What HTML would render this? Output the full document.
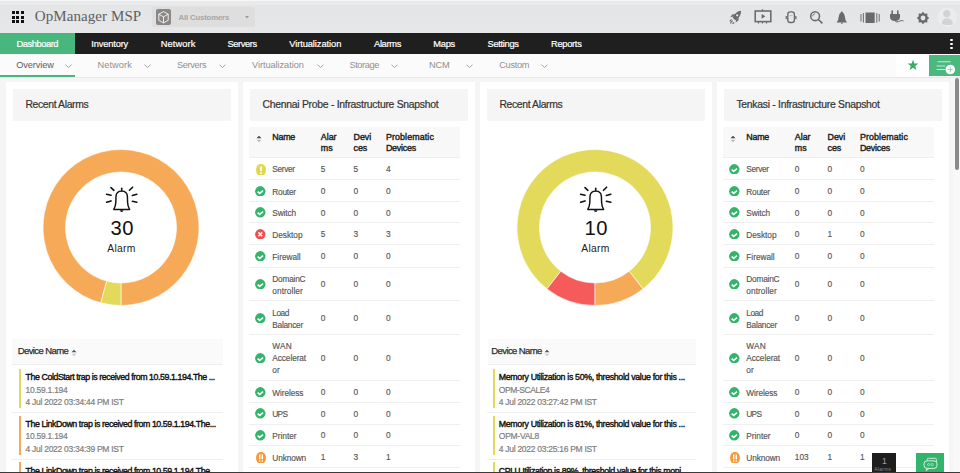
<!DOCTYPE html><html><head><meta charset="utf-8"><style>
*{margin:0;padding:0;box-sizing:border-box}
html,body{width:960px;height:473px;overflow:hidden;background:#f5f5f6;font-family:"Liberation Sans",sans-serif;color:#333}
div,span,svg{position:absolute;white-space:nowrap}
.t{line-height:1}
#hdr{left:0;top:0;width:960px;height:33px;background:linear-gradient(#f7f7f7 0,#f7f7f7 1px,#e9eaeb 1px,#e9eaeb 4.5px,#e4e5e7 5.5px,#e6e7e9 100%)}
.gd{width:3.2px;height:3.2px;background:#111}
#cust{left:152.3px;top:7.4px;width:102.5px;height:19.5px;background:#dedede;border-radius:2px}
#custic{left:3.7px;top:1.8px;width:15.2px;height:16px;background:#8b8787;border-radius:2px}
#nav{left:0;top:33px;width:960px;height:21.4px;background:#1f1f1f}
#navact{left:0;top:33px;width:75px;height:21.4px;background:#47b77e}
#sub{left:0;top:54.4px;width:960px;height:23.4px;background:#fbfbfb;border-bottom:1px solid #e9e9e9}
#subul{left:0;top:75px;width:75px;height:2px;background:#47b77e}
.cv{width:4px;height:4px;border-right:1px solid #c2c2c2;border-bottom:1px solid #c2c2c2;transform:rotate(45deg)}
.card{top:82px;width:231.5px;height:400px;background:#fff}
.chd{top:88.7px;width:218.5px;height:32px;background:#f5f5f5}
.thd{top:127.1px;width:210.5px;height:31.3px;background:#f8f8f8;border-bottom:1px solid #eeeeee}
.sep{height:1px;background:#efefef}
.bd{width:1.5px}
</style></head><body>
<div id="hdr"></div>
<div class="gd" style="left:11.8px;top:11.2px"></div>
<div class="gd" style="left:16.3px;top:11.2px"></div>
<div class="gd" style="left:20.8px;top:11.2px"></div>
<div class="gd" style="left:11.8px;top:15.5px"></div>
<div class="gd" style="left:16.3px;top:15.5px"></div>
<div class="gd" style="left:20.8px;top:15.5px"></div>
<div class="gd" style="left:11.8px;top:19.8px"></div>
<div class="gd" style="left:16.3px;top:19.8px"></div>
<div class="gd" style="left:20.8px;top:19.8px"></div>
<span class="t" id="t0" style="left:34.75px;top:9.00px;font-size:15px;line-height:15px;letter-spacing:0.083px;font-family:'Liberation Serif',serif;color:#606060">OpManager MSP</span>
<div id="cust"><div id="custic"></div></div>
<svg style="left:157px;top:10px" width="13" height="15" viewBox="0 0 13 15"><path d="M6.5 1.6 L11.2 4.2 L11.2 10.3 L6.5 12.9 L1.8 10.3 L1.8 4.2 Z M1.8 4.2 L6.5 6.9 L11.2 4.2 M6.5 6.9 L6.5 12.9" fill="none" stroke="#fff" stroke-width="0.85" stroke-linejoin="round"/></svg>
<span class="t" id="t1" style="left:178.60px;top:14.20px;font-size:7.8px;line-height:7.8px;font-weight:bold;letter-spacing:-0.181px;color:#a6a6a6">All Customers</span>
<svg style="left:245px;top:16px" width="4" height="3" viewBox="0 0 4 3"><path d="M0 0 L4 0 L2 2.5Z" fill="#9a9a9a"/></svg>
<svg style="left:728px;top:9px" width="15" height="16" viewBox="0 0 15 16">
<path d="M13 1.8 C9.5 2 6.5 4.5 4.6 8.6 L7.2 11.2 C11.3 9.3 13 6 13 1.8Z" fill="#6a6a6a"/>
<path d="M5.2 7.6 L2.2 8.2 L4.2 5.4 L7 5Z M8.2 10.6 L7.6 13.6 L10.4 11.6 L10.8 8.8Z" fill="#6a6a6a"/>
<circle cx="9.2" cy="6.3" r="1.15" fill="#e6e7e9"/>
<path d="M2.5 14.5 C3 13 3.8 12.3 4.8 11.8 M1.8 12.4 C2.4 11.4 3 10.9 3.8 10.6 M4.6 15 C5.2 14.3 5.8 13.8 6.3 13.6" fill="none" stroke="#6a6a6a" stroke-width="1.1"/>
</svg>
<svg style="left:754px;top:9px" width="18" height="15" viewBox="0 0 18 15">
<rect x="1.2" y="2" width="15.6" height="10.6" fill="none" stroke="#6a6a6a" stroke-width="1.55"/>
<path d="M7.6 4.9 L11.4 7.3 L7.6 9.7Z" fill="#6a6a6a"/>
<path d="M8.5 0.3 L8.5 2 M4.5 12.6 L4.5 14.4 M8.5 12.6 L8.5 14.4 M12.5 12.6 L12.5 14.4" stroke="#6a6a6a" stroke-width="1.2"/>
</svg>
<svg style="left:784px;top:10px" width="14" height="14" viewBox="0 0 14 14">
<rect x="3.8" y="1.9" width="6.6" height="10.6" rx="2.6" fill="none" stroke="#6a6a6a" stroke-width="1.35"/>
<path d="M5.6 5.5 L8.6 5.5" stroke="#6a6a6a" stroke-width="0.6" opacity="0.5"/>
<rect x="1.6" y="6" width="1.5" height="3.2" fill="#6a6a6a" opacity="0.85"/>
<rect x="11.1" y="6" width="1.5" height="3.2" fill="#6a6a6a" opacity="0.85"/>
</svg>
<svg style="left:808.5px;top:10px" width="15" height="15" viewBox="0 0 15 15">
<circle cx="6.1" cy="6.2" r="4.4" fill="none" stroke="#6a6a6a" stroke-width="1.55"/>
<path d="M3.7 6.3 C3.8 4.8 4.6 3.9 6 3.8" fill="none" stroke="#6a6a6a" stroke-width="0.9"/>
<path d="M9.4 9.5 L13.4 13.4" stroke="#6a6a6a" stroke-width="1.6"/>
</svg>
<svg style="left:835.5px;top:10.8px" width="12" height="14" viewBox="0 0 12 14">
<path d="M5.8 0.4 C6.5 0.4 6.8 1.1 6.9 1.7 C8.3 2.5 8.7 4.3 9 6.6 L9.5 9 L11 11.4 L0.6 11.4 L2.1 9 L2.6 6.6 C2.9 4.3 3.3 2.5 4.7 1.7 C4.8 1.1 5.1 0.4 5.8 0.4Z" fill="#6a6a6a"/>
<path d="M4.9 11.6 L6.7 11.6 L6.5 12.8 L5.1 12.8Z" fill="#6a6a6a"/>
</svg>
<svg style="left:859.5px;top:11.5px" width="20" height="12" viewBox="0 0 20 12">
<rect x="5.5" y="0.5" width="9.2" height="10.5" fill="#6a6a6a"/>
<path d="M1 2 L1 9.5 M3.4 1 L3.4 10.5 M16.8 1 L16.8 10.5 M19.2 2 L19.2 9.5" stroke="#6a6a6a" stroke-width="1"/>
</svg>
<svg style="left:889px;top:10px" width="16" height="13" viewBox="0 0 16 13">
<path d="M3.2 1 L3.2 4 M8.8 1 L8.8 4" stroke="#6a6a6a" stroke-width="1.6" stroke-linecap="round"/>
<path d="M1 4 L11 4 L11 7 C11 9.5 9 11 6 11 C3 11 1 9.5 1 7Z" fill="#6a6a6a"/>
<path d="M6 10.5 C6.5 12.5 9 12 11 11 C12.5 10.3 13.5 10.5 14.5 11" fill="none" stroke="#6a6a6a" stroke-width="1"/>
</svg>
<svg style="left:916px;top:10.5px" width="14" height="14" viewBox="0 0 14 14">
<polygon points="7.00,0.80 8.76,2.75 11.38,2.62 11.25,5.24 13.20,7.00 11.25,8.76 11.38,11.38 8.76,11.25 7.00,13.20 5.24,11.25 2.62,11.38 2.75,8.76 0.80,7.00 2.75,5.24 2.62,2.62 5.24,2.75" fill="#6a6a6a"/>
<circle cx="7" cy="7" r="4.2" fill="#6a6a6a"/>
<circle cx="7" cy="7" r="2.4" fill="#e5e5e5"/>
</svg>
<svg style="left:937px;top:7px" width="21" height="21" viewBox="0 0 21 21">
<circle cx="10.3" cy="10.2" r="9.8" fill="#ececec"/>
<circle cx="9.8" cy="6.6" r="3.6" fill="#d3d3d3"/>
<path d="M4.9 17.2 C4.9 13 7 11.2 9.9 11.2 C12.8 11.2 15.9 13 15.9 17.2 C14 18.2 6.8 18.2 4.9 17.2Z" fill="#d3d3d3"/>
</svg>
<div id="nav"></div><div id="navact"></div>
<span class="t" id="t2" style="left:16.50px;top:39.83px;font-size:9.3px;line-height:9.3px;letter-spacing:-0.432px;color:#fff;-webkit-text-stroke:0.2px #fff">Dashboard</span>
<span class="t" id="t3" style="left:91.25px;top:39.83px;font-size:9.3px;line-height:9.3px;letter-spacing:-0.156px;color:#fff;-webkit-text-stroke:0.2px #fff">Inventory</span>
<span class="t" id="t4" style="left:160.80px;top:39.83px;font-size:9.3px;line-height:9.3px;letter-spacing:0.070px;color:#fff;-webkit-text-stroke:0.2px #fff">Network</span>
<span class="t" id="t5" style="left:227.50px;top:39.83px;font-size:9.3px;line-height:9.3px;letter-spacing:-0.404px;color:#fff;-webkit-text-stroke:0.2px #fff">Servers</span>
<span class="t" id="t6" style="left:289.20px;top:39.83px;font-size:9.3px;line-height:9.3px;letter-spacing:-0.072px;color:#fff;-webkit-text-stroke:0.2px #fff">Virtualization</span>
<span class="t" id="t7" style="left:374.00px;top:39.83px;font-size:9.3px;line-height:9.3px;letter-spacing:-0.323px;color:#fff;-webkit-text-stroke:0.2px #fff">Alarms</span>
<span class="t" id="t8" style="left:433.30px;top:39.83px;font-size:9.3px;line-height:9.3px;letter-spacing:-0.259px;color:#fff;-webkit-text-stroke:0.2px #fff">Maps</span>
<span class="t" id="t9" style="left:487.50px;top:39.83px;font-size:9.3px;line-height:9.3px;letter-spacing:-0.312px;color:#fff;-webkit-text-stroke:0.2px #fff">Settings</span>
<span class="t" id="t10" style="left:551.00px;top:39.83px;font-size:9.3px;line-height:9.3px;letter-spacing:-0.295px;color:#fff;-webkit-text-stroke:0.2px #fff">Reports</span>
<div style="left:950px;top:38.6px;width:3px;height:2.6px;background:#fff;border-radius:1px"></div>
<div style="left:950px;top:42.7px;width:3px;height:2.6px;background:#fff;border-radius:1px"></div>
<div style="left:950px;top:46.8px;width:3px;height:2.6px;background:#fff;border-radius:1px"></div>
<div id="sub"></div><div id="subul"></div>
<div style="left:896px;top:54.5px;width:33px;height:22px;background:#fff"></div>
<span class="t" id="t11" style="left:16.25px;top:60.91px;font-size:9.2px;line-height:9.2px;letter-spacing:-0.100px;color:#5a5a5a">Overview</span>
<svg style="left:64.6px;top:63.9px" width="7" height="4.5" viewBox="0 0 7 4.5"><path d="M0.5 0.6 L3.5 3.6 L6.5 0.6" fill="none" stroke="#a3a3a3" stroke-width="1"/></svg>
<span class="t" id="t12" style="left:97.40px;top:60.91px;font-size:9.2px;line-height:9.2px;letter-spacing:0.128px;color:#8f8f8f">Network</span>
<svg style="left:143.7px;top:63.9px" width="7" height="4.5" viewBox="0 0 7 4.5"><path d="M0.5 0.6 L3.5 3.6 L6.5 0.6" fill="none" stroke="#a3a3a3" stroke-width="1"/></svg>
<span class="t" id="t13" style="left:177.00px;top:60.91px;font-size:9.2px;line-height:9.2px;letter-spacing:-0.344px;color:#8f8f8f">Servers</span>
<svg style="left:218.6px;top:63.9px" width="7" height="4.5" viewBox="0 0 7 4.5"><path d="M0.5 0.6 L3.5 3.6 L6.5 0.6" fill="none" stroke="#a3a3a3" stroke-width="1"/></svg>
<span class="t" id="t14" style="left:252.00px;top:60.91px;font-size:9.2px;line-height:9.2px;letter-spacing:-0.049px;color:#8f8f8f">Virtualization</span>
<svg style="left:316.5px;top:63.9px" width="7" height="4.5" viewBox="0 0 7 4.5"><path d="M0.5 0.6 L3.5 3.6 L6.5 0.6" fill="none" stroke="#a3a3a3" stroke-width="1"/></svg>
<span class="t" id="t15" style="left:349.40px;top:60.91px;font-size:9.2px;line-height:9.2px;letter-spacing:-0.370px;color:#8f8f8f">Storage</span>
<svg style="left:391.1px;top:63.9px" width="7" height="4.5" viewBox="0 0 7 4.5"><path d="M0.5 0.6 L3.5 3.6 L6.5 0.6" fill="none" stroke="#a3a3a3" stroke-width="1"/></svg>
<span class="t" id="t16" style="left:429.00px;top:60.91px;font-size:9.2px;line-height:9.2px;letter-spacing:-0.112px;color:#8f8f8f">NCM</span>
<svg style="left:465.5px;top:63.9px" width="7" height="4.5" viewBox="0 0 7 4.5"><path d="M0.5 0.6 L3.5 3.6 L6.5 0.6" fill="none" stroke="#a3a3a3" stroke-width="1"/></svg>
<span class="t" id="t17" style="left:499.30px;top:60.91px;font-size:9.2px;line-height:9.2px;letter-spacing:-0.326px;color:#8f8f8f">Custom</span>
<svg style="left:540.7px;top:63.9px" width="7" height="4.5" viewBox="0 0 7 4.5"><path d="M0.5 0.6 L3.5 3.6 L6.5 0.6" fill="none" stroke="#a3a3a3" stroke-width="1"/></svg>
<svg style="left:907px;top:59.4px" width="12" height="12" viewBox="0 0 24 24"><path d="M12 1.5 L14.8 9 L22.8 9.2 L16.5 14.2 L18.7 22 L12 17.4 L5.3 22 L7.5 14.2 L1.2 9.2 L9.2 9Z" fill="#3aac6c"/></svg>
<div style="left:928.8px;top:54.8px;width:31.2px;height:21.7px;background:#4bb87e"></div>
<svg style="left:934px;top:58px" width="22" height="18" viewBox="0 0 22 18">
<path d="M3.5 3.7 L16.6 3.7" stroke="#b8e3ca" stroke-width="1.2"/>
<path d="M2.6 8 L11 8 M2.6 11.5 L11 11.5" stroke="#c9ead7" stroke-width="1.1"/>
<circle cx="16.3" cy="11.5" r="4.8" fill="#fff"/>
<path d="M16.3 9 L16.3 14 M13.8 11.5 L18.8 11.5" stroke="#8fd0ab" stroke-width="0.9"/>
</svg>
<div class="card" style="left:6px"></div>
<div class="chd" style="left:12.5px"></div>
<div class="card" style="left:243px"></div>
<div class="chd" style="left:249.5px"></div>
<div class="card" style="left:480px"></div>
<div class="chd" style="left:486.5px"></div>
<div class="card" style="left:717px"></div>
<div class="chd" style="left:723.5px"></div>
<span class="t" id="t18" style="left:25.40px;top:100.20px;font-size:10.4px;line-height:10.4px;letter-spacing:-0.360px;color:#333;-webkit-text-stroke:0.2px #333">Recent Alarms</span>
<span class="t" id="t19" style="left:262.50px;top:100.20px;font-size:10.4px;line-height:10.4px;letter-spacing:-0.273px;color:#333;-webkit-text-stroke:0.2px #333">Chennai Probe - Infrastructure Snapshot</span>
<span class="t" id="t20" style="left:499.40px;top:100.20px;font-size:10.4px;line-height:10.4px;letter-spacing:-0.360px;color:#333;-webkit-text-stroke:0.2px #333">Recent Alarms</span>
<span class="t" id="t21" style="left:736.40px;top:100.20px;font-size:10.4px;line-height:10.4px;letter-spacing:-0.278px;color:#333;-webkit-text-stroke:0.2px #333">Tenkasi - Infrastructure Snapshot</span>
<svg style="left:0;top:0" width="960" height="473"><path d="M100.81 302.84 A78 78 0 1 1 121.00 305.50 L121.00 283.00 A55.5 55.5 0 1 0 106.64 281.11Z" fill="#f6a956" stroke="#fff" stroke-width="0.6"/><path d="M121.00 305.50 A78 78 0 0 1 100.81 302.84 L106.64 281.11 A55.5 55.5 0 0 0 121.00 283.00Z" fill="#e3da5c" stroke="#fff" stroke-width="0.6"/></svg>
<svg style="left:104.0px;top:184px" width="36" height="30" viewBox="0 0 36 30">
<path d="M17.7 4.3 L17.7 6.8" stroke="#111" stroke-width="1.5" stroke-linecap="round"/>
<path d="M17.7 7.1 C14.4 7.1 12.2 9.3 12 12.4 L11.8 18.5 C11.7 21.3 11.1 23.3 9.8 25.4 L25.6 25.4 C24.3 23.3 23.7 21.3 23.6 18.5 L23.4 12.4 C23.2 9.3 21 7.1 17.7 7.1Z" fill="none" stroke="#111" stroke-width="1.45" stroke-linejoin="round"/>
<path d="M16 26.3 A1.7 1.7 0 0 0 19.4 26.3Z" fill="#111"/>
<path d="M7 3.6 L9.9 6.3 M2.6 10.2 L7 11.3 M2.6 18.3 L7 16.9 M28.6 3.2 L25.5 6.3 M32.8 10.2 L28.4 11.5 M32.8 18.3 L28.4 17.2" stroke="#111" stroke-width="1.6" stroke-linecap="round"/>
</svg>
<span class="t" id="t22" style="left:110.50px;top:218.40px;font-size:20.2px;line-height:20.2px;letter-spacing:0.416px;color:#111">30</span>
<span class="t" id="t23" style="left:107.20px;top:243.58px;font-size:10.3px;line-height:10.3px;letter-spacing:0.322px;color:#222">Alarm</span>
<svg style="left:0;top:0" width="960" height="473"><path d="M546.98 288.96 A78 78 0 1 1 643.02 288.96 L629.17 271.23 A55.5 55.5 0 1 0 560.83 271.23Z" fill="#e3da5c" stroke="#fff" stroke-width="0.6"/><path d="M595.00 305.50 A78 78 0 0 1 546.98 288.96 L560.83 271.23 A55.5 55.5 0 0 0 595.00 283.00Z" fill="#f55b5a" stroke="#fff" stroke-width="0.6"/><path d="M643.02 288.96 A78 78 0 0 1 595.00 305.50 L595.00 283.00 A55.5 55.5 0 0 0 629.17 271.23Z" fill="#f6a956" stroke="#fff" stroke-width="0.6"/></svg>
<svg style="left:578.0px;top:184px" width="36" height="30" viewBox="0 0 36 30">
<path d="M17.7 4.3 L17.7 6.8" stroke="#111" stroke-width="1.5" stroke-linecap="round"/>
<path d="M17.7 7.1 C14.4 7.1 12.2 9.3 12 12.4 L11.8 18.5 C11.7 21.3 11.1 23.3 9.8 25.4 L25.6 25.4 C24.3 23.3 23.7 21.3 23.6 18.5 L23.4 12.4 C23.2 9.3 21 7.1 17.7 7.1Z" fill="none" stroke="#111" stroke-width="1.45" stroke-linejoin="round"/>
<path d="M16 26.3 A1.7 1.7 0 0 0 19.4 26.3Z" fill="#111"/>
<path d="M7 3.6 L9.9 6.3 M2.6 10.2 L7 11.3 M2.6 18.3 L7 16.9 M28.6 3.2 L25.5 6.3 M32.8 10.2 L28.4 11.5 M32.8 18.3 L28.4 17.2" stroke="#111" stroke-width="1.6" stroke-linecap="round"/>
</svg>
<span class="t" id="t24" style="left:584.50px;top:218.40px;font-size:20.2px;line-height:20.2px;letter-spacing:0.416px;color:#111">10</span>
<span class="t" id="t25" style="left:581.20px;top:243.58px;font-size:10.3px;line-height:10.3px;letter-spacing:0.322px;color:#222">Alarm</span>
<div style="left:12.3px;top:339px;width:210.7px;height:25.6px;background:#fafafa"></div>
<div class="sep" style="left:12.3px;top:364.3px;width:210.7px;background:#eeeeee"></div>
<span class="t" id="t26" style="left:17.70px;top:346.26px;font-size:9.5px;line-height:9.5px;letter-spacing:-0.594px;color:#2e2e2e;-webkit-text-stroke:0.25px #2e2e2e">Device Name</span>
<svg style="left:70.5px;top:349px" width="6" height="8" viewBox="0 0 6 8"><path d="M0.5 3.2 L3 0.8 L5.5 3.2Z" fill="#555"/><path d="M0.5 4.8 L3 7.2 L5.5 4.8Z" fill="#ccc"/></svg>
<div class="bd" style="left:19.4px;top:368.8px;height:39px;background:#e3da5c"></div>
<span class="t" id="t27" style="left:25.60px;top:373.35px;font-size:8.8px;line-height:8.8px;letter-spacing:-0.426px;color:#111;-webkit-text-stroke:0.38px #111">The ColdStart trap is received from 10.59.1.194.The ...</span>
<span class="t" id="t28" style="left:25.60px;top:385.60px;font-size:8.5px;line-height:8.5px;letter-spacing:-0.273px;color:#808080;-webkit-text-stroke:0.2px #808080">10.59.1.194</span>
<span class="t" id="t29" style="left:25.60px;top:398.40px;font-size:8.5px;line-height:8.5px;letter-spacing:-0.284px;color:#808080;-webkit-text-stroke:0.2px #808080">4 Jul 2022 03:34:44 PM IST</span>
<div class="sep" style="left:11.3px;top:412.2px;width:212.1px"></div>
<div class="bd" style="left:19.4px;top:415.6px;height:39px;background:#f6a956"></div>
<span class="t" id="t30" style="left:25.60px;top:420.15px;font-size:8.8px;line-height:8.8px;letter-spacing:-0.415px;color:#111;-webkit-text-stroke:0.38px #111">The LinkDown trap is received from 10.59.1.194.The...</span>
<span class="t" id="t31" style="left:25.60px;top:432.40px;font-size:8.5px;line-height:8.5px;letter-spacing:-0.273px;color:#808080;-webkit-text-stroke:0.2px #808080">10.59.1.194</span>
<span class="t" id="t32" style="left:25.60px;top:445.20px;font-size:8.5px;line-height:8.5px;letter-spacing:-0.284px;color:#808080;-webkit-text-stroke:0.2px #808080">4 Jul 2022 03:34:39 PM IST</span>
<div class="sep" style="left:11.3px;top:459.0px;width:212.1px"></div>
<div class="bd" style="left:19.4px;top:462.4px;height:39px;background:#f6a956"></div>
<span class="t" id="t33" style="left:25.60px;top:466.95px;font-size:8.8px;line-height:8.8px;letter-spacing:-0.415px;color:#111;-webkit-text-stroke:0.38px #111">The LinkDown trap is received from 10.59.1.194.The...</span>
<div style="left:488px;top:339px;width:208px;height:25.6px;background:#fafafa"></div>
<div class="sep" style="left:488px;top:364.3px;width:208px;background:#eeeeee"></div>
<span class="t" id="t34" style="left:491.30px;top:346.26px;font-size:9.5px;line-height:9.5px;letter-spacing:-0.594px;color:#2e2e2e;-webkit-text-stroke:0.25px #2e2e2e">Device Name</span>
<svg style="left:544.1px;top:349px" width="6" height="8" viewBox="0 0 6 8"><path d="M0.5 3.2 L3 0.8 L5.5 3.2Z" fill="#555"/><path d="M0.5 4.8 L3 7.2 L5.5 4.8Z" fill="#ccc"/></svg>
<div class="bd" style="left:493px;top:368.8px;height:39px;background:#e3da5c"></div>
<span class="t" id="t35" style="left:498.80px;top:373.35px;font-size:8.8px;line-height:8.8px;letter-spacing:-0.332px;color:#111;-webkit-text-stroke:0.38px #111">Memory Utilization is 50%, threshold value for this ...</span>
<span class="t" id="t36" style="left:498.80px;top:385.60px;font-size:8.5px;line-height:8.5px;letter-spacing:-0.440px;color:#808080;-webkit-text-stroke:0.2px #808080">OPM-SCALE4</span>
<span class="t" id="t37" style="left:498.80px;top:398.40px;font-size:8.5px;line-height:8.5px;letter-spacing:-0.284px;color:#808080;-webkit-text-stroke:0.2px #808080">4 Jul 2022 03:27:42 PM IST</span>
<div class="sep" style="left:487px;top:412.2px;width:208.79999999999995px"></div>
<div class="bd" style="left:493px;top:415.6px;height:39px;background:#e3da5c"></div>
<span class="t" id="t38" style="left:498.80px;top:420.15px;font-size:8.8px;line-height:8.8px;letter-spacing:-0.332px;color:#111;-webkit-text-stroke:0.38px #111">Memory Utilization is 81%, threshold value for this ...</span>
<span class="t" id="t39" style="left:498.80px;top:432.40px;font-size:8.5px;line-height:8.5px;letter-spacing:-0.270px;color:#808080;-webkit-text-stroke:0.2px #808080">OPM-VAL8</span>
<span class="t" id="t40" style="left:498.80px;top:445.20px;font-size:8.5px;line-height:8.5px;letter-spacing:-0.284px;color:#808080;-webkit-text-stroke:0.2px #808080">4 Jul 2022 03:25:16 PM IST</span>
<div class="sep" style="left:487px;top:459.0px;width:208.79999999999995px"></div>
<div class="bd" style="left:493px;top:462.4px;height:39px;background:#e3da5c"></div>
<span class="t" id="t41" style="left:498.80px;top:466.95px;font-size:8.8px;line-height:8.8px;letter-spacing:-0.394px;color:#111;-webkit-text-stroke:0.38px #111">CPU Utilization is 89%, threshold value for this moni...</span>
<div class="thd" style="left:249px"></div>
<svg style="left:255.5px;top:135.2px" width="6" height="8" viewBox="0 0 6 8"><path d="M0.5 3.2 L3 0.8 L5.5 3.2Z" fill="#444"/><path d="M0.5 4.8 L3 7.2 L5.5 4.8Z" fill="#bbb"/></svg>
<span class="t" id="t42" style="left:272.30px;top:133.37px;font-size:8.9px;line-height:8.9px;letter-spacing:-0.247px;color:#222;-webkit-text-stroke:0.4px #222">Name</span>
<span class="t" id="t43" style="left:320.80px;top:133.37px;font-size:8.9px;line-height:8.9px;letter-spacing:-0.024px;color:#222;-webkit-text-stroke:0.4px #222">Alar</span>
<span class="t" id="t44" style="left:320.80px;top:143.77px;font-size:8.9px;line-height:8.9px;letter-spacing:0.000px;color:#222;-webkit-text-stroke:0.4px #222">ms</span>
<span class="t" id="t45" style="left:353.50px;top:133.37px;font-size:8.9px;line-height:8.9px;letter-spacing:-0.016px;color:#222;-webkit-text-stroke:0.4px #222">Devi</span>
<span class="t" id="t46" style="left:353.50px;top:143.77px;font-size:8.9px;line-height:8.9px;letter-spacing:0.000px;color:#222;-webkit-text-stroke:0.4px #222">ces</span>
<span class="t" id="t47" style="left:385.90px;top:133.37px;font-size:8.9px;line-height:8.9px;letter-spacing:0.113px;color:#222;-webkit-text-stroke:0.4px #222">Problematic</span>
<span class="t" id="t48" style="left:385.90px;top:143.77px;font-size:8.9px;line-height:8.9px;letter-spacing:-0.211px;color:#222;-webkit-text-stroke:0.4px #222">Devices</span>
<div class="sep" style="left:249px;top:179.3px;width:210.5px"></div>
<svg style="left:255.8px;top:163.5px" width="10" height="11.8" viewBox="0 0 10 11.8"><path d="M5 0.1 C8.2 0.1 9.9 2.3 9.9 5.9 C9.9 9.5 8.2 11.7 5 11.7 C1.8 11.7 0.1 9.5 0.1 5.9 C0.1 2.3 1.8 0.1 5 0.1Z" fill="#e2d84a"/><path d="M5 2.6 L5 7" stroke="#fff" stroke-width="1.7"/><circle cx="5" cy="9" r="0.9" fill="#fff"/></svg>
<span class="t" id="t49" style="left:272.30px;top:165.37px;font-size:8.3px;line-height:8.3px;letter-spacing:-0.340px;color:#555;-webkit-text-stroke:0.15px #555">Server</span>
<span class="t" id="t50" style="left:320.80px;top:164.97px;font-size:8.3px;line-height:8.3px;letter-spacing:0.000px;color:#555;-webkit-text-stroke:0.15px #555">5</span>
<span class="t" id="t51" style="left:353.50px;top:164.97px;font-size:8.3px;line-height:8.3px;letter-spacing:0.000px;color:#555;-webkit-text-stroke:0.15px #555">5</span>
<span class="t" id="t52" style="left:385.90px;top:164.97px;font-size:8.3px;line-height:8.3px;letter-spacing:0.000px;color:#555;-webkit-text-stroke:0.15px #555">4</span>
<div class="sep" style="left:249px;top:200.9px;width:210.5px"></div>
<svg style="left:255.4px;top:185.6px" width="10.6" height="10.6" viewBox="0 0 10 10"><circle cx="5" cy="5" r="4.9" fill="#34b46b"/><path d="M2.5 5.3 L4.4 7 L7.6 4.3" fill="none" stroke="#fff" stroke-width="1.55"/></svg>
<span class="t" id="t53" style="left:272.30px;top:187.77px;font-size:8.3px;line-height:8.3px;letter-spacing:-0.234px;color:#555;-webkit-text-stroke:0.15px #555">Router</span>
<span class="t" id="t54" style="left:320.80px;top:186.97px;font-size:8.3px;line-height:8.3px;letter-spacing:0.000px;color:#555;-webkit-text-stroke:0.15px #555">0</span>
<span class="t" id="t55" style="left:353.50px;top:186.97px;font-size:8.3px;line-height:8.3px;letter-spacing:0.000px;color:#555;-webkit-text-stroke:0.15px #555">0</span>
<span class="t" id="t56" style="left:385.90px;top:186.97px;font-size:8.3px;line-height:8.3px;letter-spacing:0.000px;color:#555;-webkit-text-stroke:0.15px #555">0</span>
<div class="sep" style="left:249px;top:222.4px;width:210.5px"></div>
<svg style="left:255.4px;top:207.2px" width="10.6" height="10.6" viewBox="0 0 10 10"><circle cx="5" cy="5" r="4.9" fill="#34b46b"/><path d="M2.5 5.3 L4.4 7 L7.6 4.3" fill="none" stroke="#fff" stroke-width="1.55"/></svg>
<span class="t" id="t57" style="left:272.30px;top:209.37px;font-size:8.3px;line-height:8.3px;letter-spacing:-0.123px;color:#555;-webkit-text-stroke:0.15px #555">Switch</span>
<span class="t" id="t58" style="left:320.80px;top:208.52px;font-size:8.3px;line-height:8.3px;letter-spacing:0.000px;color:#555;-webkit-text-stroke:0.15px #555">0</span>
<span class="t" id="t59" style="left:353.50px;top:208.52px;font-size:8.3px;line-height:8.3px;letter-spacing:0.000px;color:#555;-webkit-text-stroke:0.15px #555">0</span>
<span class="t" id="t60" style="left:385.90px;top:208.52px;font-size:8.3px;line-height:8.3px;letter-spacing:0.000px;color:#555;-webkit-text-stroke:0.15px #555">0</span>
<div class="sep" style="left:249px;top:244.2px;width:210.5px"></div>
<svg style="left:255.4px;top:228.8px" width="10.6" height="10.6" viewBox="0 0 10 10"><circle cx="5" cy="5" r="4.9" fill="#ef4e4e"/><path d="M3.2 3.2 L6.8 6.8 M6.8 3.2 L3.2 6.8" fill="none" stroke="#fff" stroke-width="1.4"/></svg>
<span class="t" id="t61" style="left:272.30px;top:230.87px;font-size:8.3px;line-height:8.3px;letter-spacing:-0.034px;color:#555;-webkit-text-stroke:0.15px #555">Desktop</span>
<span class="t" id="t62" style="left:320.80px;top:230.17px;font-size:8.3px;line-height:8.3px;letter-spacing:0.000px;color:#555;-webkit-text-stroke:0.15px #555">5</span>
<span class="t" id="t63" style="left:353.50px;top:230.17px;font-size:8.3px;line-height:8.3px;letter-spacing:0.000px;color:#555;-webkit-text-stroke:0.15px #555">3</span>
<span class="t" id="t64" style="left:385.90px;top:230.17px;font-size:8.3px;line-height:8.3px;letter-spacing:0.000px;color:#555;-webkit-text-stroke:0.15px #555">3</span>
<div class="sep" style="left:249px;top:266.7px;width:210.5px"></div>
<svg style="left:255.4px;top:250.9px" width="10.6" height="10.6" viewBox="0 0 10 10"><circle cx="5" cy="5" r="4.9" fill="#34b46b"/><path d="M2.5 5.3 L4.4 7 L7.6 4.3" fill="none" stroke="#fff" stroke-width="1.55"/></svg>
<span class="t" id="t65" style="left:272.30px;top:252.67px;font-size:8.3px;line-height:8.3px;letter-spacing:-0.024px;color:#555;-webkit-text-stroke:0.15px #555">Firewall</span>
<span class="t" id="t66" style="left:320.80px;top:252.32px;font-size:8.3px;line-height:8.3px;letter-spacing:0.000px;color:#555;-webkit-text-stroke:0.15px #555">0</span>
<span class="t" id="t67" style="left:353.50px;top:252.32px;font-size:8.3px;line-height:8.3px;letter-spacing:0.000px;color:#555;-webkit-text-stroke:0.15px #555">0</span>
<span class="t" id="t68" style="left:385.90px;top:252.32px;font-size:8.3px;line-height:8.3px;letter-spacing:0.000px;color:#555;-webkit-text-stroke:0.15px #555">0</span>
<div class="sep" style="left:249px;top:300.2px;width:210.5px"></div>
<svg style="left:255.4px;top:278.9px" width="10.6" height="10.6" viewBox="0 0 10 10"><circle cx="5" cy="5" r="4.9" fill="#34b46b"/><path d="M2.5 5.3 L4.4 7 L7.6 4.3" fill="none" stroke="#fff" stroke-width="1.55"/></svg>
<span class="t" id="t69" style="left:272.30px;top:275.17px;font-size:8.3px;line-height:8.3px;letter-spacing:-0.228px;color:#555;-webkit-text-stroke:0.15px #555">DomainC</span>
<span class="t" id="t70" style="left:272.30px;top:287.17px;font-size:8.3px;line-height:8.3px;letter-spacing:0.068px;color:#555;-webkit-text-stroke:0.15px #555">ontroller</span>
<span class="t" id="t71" style="left:320.80px;top:280.32px;font-size:8.3px;line-height:8.3px;letter-spacing:0.000px;color:#555;-webkit-text-stroke:0.15px #555">0</span>
<span class="t" id="t72" style="left:353.50px;top:280.32px;font-size:8.3px;line-height:8.3px;letter-spacing:0.000px;color:#555;-webkit-text-stroke:0.15px #555">0</span>
<span class="t" id="t73" style="left:385.90px;top:280.32px;font-size:8.3px;line-height:8.3px;letter-spacing:0.000px;color:#555;-webkit-text-stroke:0.15px #555">0</span>
<div class="sep" style="left:249px;top:334.0px;width:210.5px"></div>
<svg style="left:255.4px;top:312.6px" width="10.6" height="10.6" viewBox="0 0 10 10"><circle cx="5" cy="5" r="4.9" fill="#34b46b"/><path d="M2.5 5.3 L4.4 7 L7.6 4.3" fill="none" stroke="#fff" stroke-width="1.55"/></svg>
<span class="t" id="t74" style="left:272.30px;top:308.67px;font-size:8.3px;line-height:8.3px;letter-spacing:-0.467px;color:#555;-webkit-text-stroke:0.15px #555">Load</span>
<span class="t" id="t75" style="left:272.30px;top:320.67px;font-size:8.3px;line-height:8.3px;letter-spacing:-0.269px;color:#555;-webkit-text-stroke:0.15px #555">Balancer</span>
<span class="t" id="t76" style="left:320.80px;top:313.97px;font-size:8.3px;line-height:8.3px;letter-spacing:0.000px;color:#555;-webkit-text-stroke:0.15px #555">0</span>
<span class="t" id="t77" style="left:353.50px;top:313.97px;font-size:8.3px;line-height:8.3px;letter-spacing:0.000px;color:#555;-webkit-text-stroke:0.15px #555">0</span>
<span class="t" id="t78" style="left:385.90px;top:313.97px;font-size:8.3px;line-height:8.3px;letter-spacing:0.000px;color:#555;-webkit-text-stroke:0.15px #555">0</span>
<div class="sep" style="left:249px;top:380.3px;width:210.5px"></div>
<svg style="left:255.4px;top:352.6px" width="10.6" height="10.6" viewBox="0 0 10 10"><circle cx="5" cy="5" r="4.9" fill="#34b46b"/><path d="M2.5 5.3 L4.4 7 L7.6 4.3" fill="none" stroke="#fff" stroke-width="1.55"/></svg>
<span class="t" id="t79" style="left:272.30px;top:342.47px;font-size:8.3px;line-height:8.3px;letter-spacing:0.146px;color:#555;-webkit-text-stroke:0.15px #555">WAN</span>
<span class="t" id="t80" style="left:272.30px;top:354.47px;font-size:8.3px;line-height:8.3px;letter-spacing:-0.088px;color:#555;-webkit-text-stroke:0.15px #555">Accelerat</span>
<span class="t" id="t81" style="left:272.30px;top:366.47px;font-size:8.3px;line-height:8.3px;letter-spacing:0.005px;color:#555;-webkit-text-stroke:0.15px #555">or</span>
<span class="t" id="t82" style="left:320.80px;top:354.02px;font-size:8.3px;line-height:8.3px;letter-spacing:0.000px;color:#555;-webkit-text-stroke:0.15px #555">0</span>
<span class="t" id="t83" style="left:353.50px;top:354.02px;font-size:8.3px;line-height:8.3px;letter-spacing:0.000px;color:#555;-webkit-text-stroke:0.15px #555">0</span>
<span class="t" id="t84" style="left:385.90px;top:354.02px;font-size:8.3px;line-height:8.3px;letter-spacing:0.000px;color:#555;-webkit-text-stroke:0.15px #555">0</span>
<div class="sep" style="left:249px;top:402.0px;width:210.5px"></div>
<svg style="left:255.4px;top:386.6px" width="10.6" height="10.6" viewBox="0 0 10 10"><circle cx="5" cy="5" r="4.9" fill="#34b46b"/><path d="M2.5 5.3 L4.4 7 L7.6 4.3" fill="none" stroke="#fff" stroke-width="1.55"/></svg>
<span class="t" id="t85" style="left:272.30px;top:388.77px;font-size:8.3px;line-height:8.3px;letter-spacing:-0.102px;color:#555;-webkit-text-stroke:0.15px #555">Wireless</span>
<span class="t" id="t86" style="left:320.80px;top:388.02px;font-size:8.3px;line-height:8.3px;letter-spacing:0.000px;color:#555;-webkit-text-stroke:0.15px #555">0</span>
<span class="t" id="t87" style="left:353.50px;top:388.02px;font-size:8.3px;line-height:8.3px;letter-spacing:0.000px;color:#555;-webkit-text-stroke:0.15px #555">0</span>
<span class="t" id="t88" style="left:385.90px;top:388.02px;font-size:8.3px;line-height:8.3px;letter-spacing:0.000px;color:#555;-webkit-text-stroke:0.15px #555">0</span>
<div class="sep" style="left:249px;top:423.8px;width:210.5px"></div>
<svg style="left:255.4px;top:408.4px" width="10.6" height="10.6" viewBox="0 0 10 10"><circle cx="5" cy="5" r="4.9" fill="#34b46b"/><path d="M2.5 5.3 L4.4 7 L7.6 4.3" fill="none" stroke="#fff" stroke-width="1.55"/></svg>
<span class="t" id="t89" style="left:272.30px;top:410.47px;font-size:8.3px;line-height:8.3px;letter-spacing:-0.721px;color:#555;-webkit-text-stroke:0.15px #555">UPS</span>
<span class="t" id="t90" style="left:320.80px;top:409.77px;font-size:8.3px;line-height:8.3px;letter-spacing:0.000px;color:#555;-webkit-text-stroke:0.15px #555">0</span>
<span class="t" id="t91" style="left:353.50px;top:409.77px;font-size:8.3px;line-height:8.3px;letter-spacing:0.000px;color:#555;-webkit-text-stroke:0.15px #555">0</span>
<span class="t" id="t92" style="left:385.90px;top:409.77px;font-size:8.3px;line-height:8.3px;letter-spacing:0.000px;color:#555;-webkit-text-stroke:0.15px #555">0</span>
<div class="sep" style="left:249px;top:445.3px;width:210.5px"></div>
<svg style="left:255.4px;top:430.1px" width="10.6" height="10.6" viewBox="0 0 10 10"><circle cx="5" cy="5" r="4.9" fill="#34b46b"/><path d="M2.5 5.3 L4.4 7 L7.6 4.3" fill="none" stroke="#fff" stroke-width="1.55"/></svg>
<span class="t" id="t93" style="left:272.30px;top:432.27px;font-size:8.3px;line-height:8.3px;letter-spacing:-0.034px;color:#555;-webkit-text-stroke:0.15px #555">Printer</span>
<span class="t" id="t94" style="left:320.80px;top:431.42px;font-size:8.3px;line-height:8.3px;letter-spacing:0.000px;color:#555;-webkit-text-stroke:0.15px #555">0</span>
<span class="t" id="t95" style="left:353.50px;top:431.42px;font-size:8.3px;line-height:8.3px;letter-spacing:0.000px;color:#555;-webkit-text-stroke:0.15px #555">0</span>
<span class="t" id="t96" style="left:385.90px;top:431.42px;font-size:8.3px;line-height:8.3px;letter-spacing:0.000px;color:#555;-webkit-text-stroke:0.15px #555">0</span>
<div class="sep" style="left:249px;top:467.0px;width:210.5px"></div>
<svg style="left:255.8px;top:451.6px" width="10" height="11.8" viewBox="0 0 10 11.8"><path d="M5 0.1 C8.2 0.1 9.9 2.3 9.9 5.9 C9.9 9.5 8.2 11.7 5 11.7 C1.8 11.7 0.1 9.5 0.1 5.9 C0.1 2.3 1.8 0.1 5 0.1Z" fill="#f59a3a"/><path d="M3.7 2.4 L3.7 7.2 M6.3 2.4 L6.3 7.2" stroke="#fff" stroke-width="1.4"/><circle cx="3.7" cy="9" r="0.75" fill="#fff"/><circle cx="6.3" cy="9" r="0.75" fill="#fff"/></svg>
<span class="t" id="t97" style="left:272.30px;top:453.77px;font-size:8.3px;line-height:8.3px;letter-spacing:-0.113px;color:#555;-webkit-text-stroke:0.15px #555">Unknown</span>
<span class="t" id="t98" style="left:320.80px;top:453.02px;font-size:8.3px;line-height:8.3px;letter-spacing:0.000px;color:#555;-webkit-text-stroke:0.15px #555">1</span>
<span class="t" id="t99" style="left:353.50px;top:453.02px;font-size:8.3px;line-height:8.3px;letter-spacing:0.000px;color:#555;-webkit-text-stroke:0.15px #555">3</span>
<span class="t" id="t100" style="left:385.90px;top:453.02px;font-size:8.3px;line-height:8.3px;letter-spacing:0.000px;color:#555;-webkit-text-stroke:0.15px #555">1</span>
<div class="thd" style="left:723px"></div>
<svg style="left:729.5px;top:135.2px" width="6" height="8" viewBox="0 0 6 8"><path d="M0.5 3.2 L3 0.8 L5.5 3.2Z" fill="#444"/><path d="M0.5 4.8 L3 7.2 L5.5 4.8Z" fill="#bbb"/></svg>
<span class="t" id="t101" style="left:746.30px;top:133.37px;font-size:8.9px;line-height:8.9px;letter-spacing:-0.247px;color:#222;-webkit-text-stroke:0.4px #222">Name</span>
<span class="t" id="t102" style="left:794.80px;top:133.37px;font-size:8.9px;line-height:8.9px;letter-spacing:-0.024px;color:#222;-webkit-text-stroke:0.4px #222">Alar</span>
<span class="t" id="t103" style="left:794.80px;top:143.77px;font-size:8.9px;line-height:8.9px;letter-spacing:0.000px;color:#222;-webkit-text-stroke:0.4px #222">ms</span>
<span class="t" id="t104" style="left:827.50px;top:133.37px;font-size:8.9px;line-height:8.9px;letter-spacing:-0.016px;color:#222;-webkit-text-stroke:0.4px #222">Devi</span>
<span class="t" id="t105" style="left:827.50px;top:143.77px;font-size:8.9px;line-height:8.9px;letter-spacing:0.000px;color:#222;-webkit-text-stroke:0.4px #222">ces</span>
<span class="t" id="t106" style="left:859.90px;top:133.37px;font-size:8.9px;line-height:8.9px;letter-spacing:0.113px;color:#222;-webkit-text-stroke:0.4px #222">Problematic</span>
<span class="t" id="t107" style="left:859.90px;top:143.77px;font-size:8.9px;line-height:8.9px;letter-spacing:-0.211px;color:#222;-webkit-text-stroke:0.4px #222">Devices</span>
<div class="sep" style="left:723px;top:179.3px;width:210.5px"></div>
<svg style="left:729.4px;top:163.6px" width="10.6" height="10.6" viewBox="0 0 10 10"><circle cx="5" cy="5" r="4.9" fill="#34b46b"/><path d="M2.5 5.3 L4.4 7 L7.6 4.3" fill="none" stroke="#fff" stroke-width="1.55"/></svg>
<span class="t" id="t108" style="left:746.30px;top:165.37px;font-size:8.3px;line-height:8.3px;letter-spacing:-0.340px;color:#555;-webkit-text-stroke:0.15px #555">Server</span>
<span class="t" id="t109" style="left:794.80px;top:164.97px;font-size:8.3px;line-height:8.3px;letter-spacing:0.000px;color:#555;-webkit-text-stroke:0.15px #555">0</span>
<span class="t" id="t110" style="left:827.50px;top:164.97px;font-size:8.3px;line-height:8.3px;letter-spacing:0.000px;color:#555;-webkit-text-stroke:0.15px #555">0</span>
<span class="t" id="t111" style="left:859.90px;top:164.97px;font-size:8.3px;line-height:8.3px;letter-spacing:0.000px;color:#555;-webkit-text-stroke:0.15px #555">0</span>
<div class="sep" style="left:723px;top:200.9px;width:210.5px"></div>
<svg style="left:729.4px;top:185.6px" width="10.6" height="10.6" viewBox="0 0 10 10"><circle cx="5" cy="5" r="4.9" fill="#34b46b"/><path d="M2.5 5.3 L4.4 7 L7.6 4.3" fill="none" stroke="#fff" stroke-width="1.55"/></svg>
<span class="t" id="t112" style="left:746.30px;top:187.77px;font-size:8.3px;line-height:8.3px;letter-spacing:-0.234px;color:#555;-webkit-text-stroke:0.15px #555">Router</span>
<span class="t" id="t113" style="left:794.80px;top:186.97px;font-size:8.3px;line-height:8.3px;letter-spacing:0.000px;color:#555;-webkit-text-stroke:0.15px #555">0</span>
<span class="t" id="t114" style="left:827.50px;top:186.97px;font-size:8.3px;line-height:8.3px;letter-spacing:0.000px;color:#555;-webkit-text-stroke:0.15px #555">0</span>
<span class="t" id="t115" style="left:859.90px;top:186.97px;font-size:8.3px;line-height:8.3px;letter-spacing:0.000px;color:#555;-webkit-text-stroke:0.15px #555">0</span>
<div class="sep" style="left:723px;top:222.4px;width:210.5px"></div>
<svg style="left:729.4px;top:207.2px" width="10.6" height="10.6" viewBox="0 0 10 10"><circle cx="5" cy="5" r="4.9" fill="#34b46b"/><path d="M2.5 5.3 L4.4 7 L7.6 4.3" fill="none" stroke="#fff" stroke-width="1.55"/></svg>
<span class="t" id="t116" style="left:746.30px;top:209.37px;font-size:8.3px;line-height:8.3px;letter-spacing:-0.123px;color:#555;-webkit-text-stroke:0.15px #555">Switch</span>
<span class="t" id="t117" style="left:794.80px;top:208.52px;font-size:8.3px;line-height:8.3px;letter-spacing:0.000px;color:#555;-webkit-text-stroke:0.15px #555">0</span>
<span class="t" id="t118" style="left:827.50px;top:208.52px;font-size:8.3px;line-height:8.3px;letter-spacing:0.000px;color:#555;-webkit-text-stroke:0.15px #555">0</span>
<span class="t" id="t119" style="left:859.90px;top:208.52px;font-size:8.3px;line-height:8.3px;letter-spacing:0.000px;color:#555;-webkit-text-stroke:0.15px #555">0</span>
<div class="sep" style="left:723px;top:244.2px;width:210.5px"></div>
<svg style="left:729.4px;top:228.8px" width="10.6" height="10.6" viewBox="0 0 10 10"><circle cx="5" cy="5" r="4.9" fill="#34b46b"/><path d="M2.5 5.3 L4.4 7 L7.6 4.3" fill="none" stroke="#fff" stroke-width="1.55"/></svg>
<span class="t" id="t120" style="left:746.30px;top:230.87px;font-size:8.3px;line-height:8.3px;letter-spacing:-0.034px;color:#555;-webkit-text-stroke:0.15px #555">Desktop</span>
<span class="t" id="t121" style="left:794.80px;top:230.17px;font-size:8.3px;line-height:8.3px;letter-spacing:0.000px;color:#555;-webkit-text-stroke:0.15px #555">0</span>
<span class="t" id="t122" style="left:827.50px;top:230.17px;font-size:8.3px;line-height:8.3px;letter-spacing:0.000px;color:#555;-webkit-text-stroke:0.15px #555">1</span>
<span class="t" id="t123" style="left:859.90px;top:230.17px;font-size:8.3px;line-height:8.3px;letter-spacing:0.000px;color:#555;-webkit-text-stroke:0.15px #555">0</span>
<div class="sep" style="left:723px;top:266.7px;width:210.5px"></div>
<svg style="left:729.4px;top:250.9px" width="10.6" height="10.6" viewBox="0 0 10 10"><circle cx="5" cy="5" r="4.9" fill="#34b46b"/><path d="M2.5 5.3 L4.4 7 L7.6 4.3" fill="none" stroke="#fff" stroke-width="1.55"/></svg>
<span class="t" id="t124" style="left:746.30px;top:252.67px;font-size:8.3px;line-height:8.3px;letter-spacing:-0.024px;color:#555;-webkit-text-stroke:0.15px #555">Firewall</span>
<span class="t" id="t125" style="left:794.80px;top:252.32px;font-size:8.3px;line-height:8.3px;letter-spacing:0.000px;color:#555;-webkit-text-stroke:0.15px #555">0</span>
<span class="t" id="t126" style="left:827.50px;top:252.32px;font-size:8.3px;line-height:8.3px;letter-spacing:0.000px;color:#555;-webkit-text-stroke:0.15px #555">0</span>
<span class="t" id="t127" style="left:859.90px;top:252.32px;font-size:8.3px;line-height:8.3px;letter-spacing:0.000px;color:#555;-webkit-text-stroke:0.15px #555">0</span>
<div class="sep" style="left:723px;top:300.2px;width:210.5px"></div>
<svg style="left:729.4px;top:278.9px" width="10.6" height="10.6" viewBox="0 0 10 10"><circle cx="5" cy="5" r="4.9" fill="#34b46b"/><path d="M2.5 5.3 L4.4 7 L7.6 4.3" fill="none" stroke="#fff" stroke-width="1.55"/></svg>
<span class="t" id="t128" style="left:746.30px;top:275.17px;font-size:8.3px;line-height:8.3px;letter-spacing:-0.228px;color:#555;-webkit-text-stroke:0.15px #555">DomainC</span>
<span class="t" id="t129" style="left:746.30px;top:287.17px;font-size:8.3px;line-height:8.3px;letter-spacing:0.068px;color:#555;-webkit-text-stroke:0.15px #555">ontroller</span>
<span class="t" id="t130" style="left:794.80px;top:280.32px;font-size:8.3px;line-height:8.3px;letter-spacing:0.000px;color:#555;-webkit-text-stroke:0.15px #555">0</span>
<span class="t" id="t131" style="left:827.50px;top:280.32px;font-size:8.3px;line-height:8.3px;letter-spacing:0.000px;color:#555;-webkit-text-stroke:0.15px #555">0</span>
<span class="t" id="t132" style="left:859.90px;top:280.32px;font-size:8.3px;line-height:8.3px;letter-spacing:0.000px;color:#555;-webkit-text-stroke:0.15px #555">0</span>
<div class="sep" style="left:723px;top:334.0px;width:210.5px"></div>
<svg style="left:729.4px;top:312.6px" width="10.6" height="10.6" viewBox="0 0 10 10"><circle cx="5" cy="5" r="4.9" fill="#34b46b"/><path d="M2.5 5.3 L4.4 7 L7.6 4.3" fill="none" stroke="#fff" stroke-width="1.55"/></svg>
<span class="t" id="t133" style="left:746.30px;top:308.67px;font-size:8.3px;line-height:8.3px;letter-spacing:-0.467px;color:#555;-webkit-text-stroke:0.15px #555">Load</span>
<span class="t" id="t134" style="left:746.30px;top:320.67px;font-size:8.3px;line-height:8.3px;letter-spacing:-0.269px;color:#555;-webkit-text-stroke:0.15px #555">Balancer</span>
<span class="t" id="t135" style="left:794.80px;top:313.97px;font-size:8.3px;line-height:8.3px;letter-spacing:0.000px;color:#555;-webkit-text-stroke:0.15px #555">0</span>
<span class="t" id="t136" style="left:827.50px;top:313.97px;font-size:8.3px;line-height:8.3px;letter-spacing:0.000px;color:#555;-webkit-text-stroke:0.15px #555">0</span>
<span class="t" id="t137" style="left:859.90px;top:313.97px;font-size:8.3px;line-height:8.3px;letter-spacing:0.000px;color:#555;-webkit-text-stroke:0.15px #555">0</span>
<div class="sep" style="left:723px;top:380.3px;width:210.5px"></div>
<svg style="left:729.4px;top:352.6px" width="10.6" height="10.6" viewBox="0 0 10 10"><circle cx="5" cy="5" r="4.9" fill="#34b46b"/><path d="M2.5 5.3 L4.4 7 L7.6 4.3" fill="none" stroke="#fff" stroke-width="1.55"/></svg>
<span class="t" id="t138" style="left:746.30px;top:342.47px;font-size:8.3px;line-height:8.3px;letter-spacing:0.146px;color:#555;-webkit-text-stroke:0.15px #555">WAN</span>
<span class="t" id="t139" style="left:746.30px;top:354.47px;font-size:8.3px;line-height:8.3px;letter-spacing:-0.088px;color:#555;-webkit-text-stroke:0.15px #555">Accelerat</span>
<span class="t" id="t140" style="left:746.30px;top:366.47px;font-size:8.3px;line-height:8.3px;letter-spacing:0.005px;color:#555;-webkit-text-stroke:0.15px #555">or</span>
<span class="t" id="t141" style="left:794.80px;top:354.02px;font-size:8.3px;line-height:8.3px;letter-spacing:0.000px;color:#555;-webkit-text-stroke:0.15px #555">0</span>
<span class="t" id="t142" style="left:827.50px;top:354.02px;font-size:8.3px;line-height:8.3px;letter-spacing:0.000px;color:#555;-webkit-text-stroke:0.15px #555">0</span>
<span class="t" id="t143" style="left:859.90px;top:354.02px;font-size:8.3px;line-height:8.3px;letter-spacing:0.000px;color:#555;-webkit-text-stroke:0.15px #555">0</span>
<div class="sep" style="left:723px;top:402.0px;width:210.5px"></div>
<svg style="left:729.4px;top:386.6px" width="10.6" height="10.6" viewBox="0 0 10 10"><circle cx="5" cy="5" r="4.9" fill="#34b46b"/><path d="M2.5 5.3 L4.4 7 L7.6 4.3" fill="none" stroke="#fff" stroke-width="1.55"/></svg>
<span class="t" id="t144" style="left:746.30px;top:388.77px;font-size:8.3px;line-height:8.3px;letter-spacing:-0.102px;color:#555;-webkit-text-stroke:0.15px #555">Wireless</span>
<span class="t" id="t145" style="left:794.80px;top:388.02px;font-size:8.3px;line-height:8.3px;letter-spacing:0.000px;color:#555;-webkit-text-stroke:0.15px #555">0</span>
<span class="t" id="t146" style="left:827.50px;top:388.02px;font-size:8.3px;line-height:8.3px;letter-spacing:0.000px;color:#555;-webkit-text-stroke:0.15px #555">0</span>
<span class="t" id="t147" style="left:859.90px;top:388.02px;font-size:8.3px;line-height:8.3px;letter-spacing:0.000px;color:#555;-webkit-text-stroke:0.15px #555">0</span>
<div class="sep" style="left:723px;top:423.8px;width:210.5px"></div>
<svg style="left:729.4px;top:408.4px" width="10.6" height="10.6" viewBox="0 0 10 10"><circle cx="5" cy="5" r="4.9" fill="#34b46b"/><path d="M2.5 5.3 L4.4 7 L7.6 4.3" fill="none" stroke="#fff" stroke-width="1.55"/></svg>
<span class="t" id="t148" style="left:746.30px;top:410.47px;font-size:8.3px;line-height:8.3px;letter-spacing:-0.721px;color:#555;-webkit-text-stroke:0.15px #555">UPS</span>
<span class="t" id="t149" style="left:794.80px;top:409.77px;font-size:8.3px;line-height:8.3px;letter-spacing:0.000px;color:#555;-webkit-text-stroke:0.15px #555">0</span>
<span class="t" id="t150" style="left:827.50px;top:409.77px;font-size:8.3px;line-height:8.3px;letter-spacing:0.000px;color:#555;-webkit-text-stroke:0.15px #555">0</span>
<span class="t" id="t151" style="left:859.90px;top:409.77px;font-size:8.3px;line-height:8.3px;letter-spacing:0.000px;color:#555;-webkit-text-stroke:0.15px #555">0</span>
<div class="sep" style="left:723px;top:445.3px;width:210.5px"></div>
<svg style="left:729.4px;top:430.1px" width="10.6" height="10.6" viewBox="0 0 10 10"><circle cx="5" cy="5" r="4.9" fill="#34b46b"/><path d="M2.5 5.3 L4.4 7 L7.6 4.3" fill="none" stroke="#fff" stroke-width="1.55"/></svg>
<span class="t" id="t152" style="left:746.30px;top:432.27px;font-size:8.3px;line-height:8.3px;letter-spacing:-0.034px;color:#555;-webkit-text-stroke:0.15px #555">Printer</span>
<span class="t" id="t153" style="left:794.80px;top:431.42px;font-size:8.3px;line-height:8.3px;letter-spacing:0.000px;color:#555;-webkit-text-stroke:0.15px #555">0</span>
<span class="t" id="t154" style="left:827.50px;top:431.42px;font-size:8.3px;line-height:8.3px;letter-spacing:0.000px;color:#555;-webkit-text-stroke:0.15px #555">0</span>
<span class="t" id="t155" style="left:859.90px;top:431.42px;font-size:8.3px;line-height:8.3px;letter-spacing:0.000px;color:#555;-webkit-text-stroke:0.15px #555">0</span>
<div class="sep" style="left:723px;top:467.0px;width:210.5px"></div>
<svg style="left:729.8px;top:451.6px" width="10" height="11.8" viewBox="0 0 10 11.8"><path d="M5 0.1 C8.2 0.1 9.9 2.3 9.9 5.9 C9.9 9.5 8.2 11.7 5 11.7 C1.8 11.7 0.1 9.5 0.1 5.9 C0.1 2.3 1.8 0.1 5 0.1Z" fill="#f59a3a"/><path d="M3.7 2.4 L3.7 7.2 M6.3 2.4 L6.3 7.2" stroke="#fff" stroke-width="1.4"/><circle cx="3.7" cy="9" r="0.75" fill="#fff"/><circle cx="6.3" cy="9" r="0.75" fill="#fff"/></svg>
<span class="t" id="t156" style="left:746.30px;top:453.77px;font-size:8.3px;line-height:8.3px;letter-spacing:-0.113px;color:#555;-webkit-text-stroke:0.15px #555">Unknown</span>
<span class="t" id="t157" style="left:794.80px;top:453.02px;font-size:8.3px;line-height:8.3px;letter-spacing:0.000px;color:#555;-webkit-text-stroke:0.15px #555">103</span>
<span class="t" id="t158" style="left:827.50px;top:453.02px;font-size:8.3px;line-height:8.3px;letter-spacing:0.000px;color:#555;-webkit-text-stroke:0.15px #555">1</span>
<span class="t" id="t159" style="left:859.90px;top:453.02px;font-size:8.3px;line-height:8.3px;letter-spacing:0.000px;color:#555;-webkit-text-stroke:0.15px #555">1</span>
<div style="left:953px;top:77.7px;width:7px;height:394px;background:#f8f8f8"></div>
<div style="left:954.8px;top:77.7px;width:4.2px;height:92px;background:#8a8a8a;border-radius:2px"></div>
<div style="left:872px;top:453px;width:24px;height:20px;background:#1e1e1e"></div>
<span class="t" id="t160" style="left:882.00px;top:457.10px;font-size:8.5px;line-height:8.5px;letter-spacing:0.000px;color:#a0a0a0">1</span>
<span class="t" id="t161" style="left:874.30px;top:466.87px;font-size:5px;line-height:5px;letter-spacing:0.240px;color:#8a8a8a">Alarms</span>
<div style="left:916.3px;top:453.2px;width:27.6px;height:19.8px;background:#33b46c"></div>
<svg style="left:920px;top:455px" width="20" height="18" viewBox="0 0 20 18">
<path d="M7.2 5.4 L7.2 4.4 Q7.2 3.3 8.3 3.3 L15.3 3.3 Q16.4 3.3 16.4 4.4 L16.4 6.8" fill="none" stroke="#c8ecd6" stroke-width="1"/>
<rect x="4" y="5.8" width="13" height="7.6" rx="3" fill="none" stroke="#d5f1e0" stroke-width="1"/>
<path d="M6.6 13.3 L6.2 15.8 L8.8 13.5" fill="none" stroke="#d5f1e0" stroke-width="0.9"/>
<circle cx="8.6" cy="9.6" r="1.1" fill="none" stroke="#c8ecd6" stroke-width="0.7"/>
<circle cx="12.2" cy="9.6" r="1.1" fill="none" stroke="#c8ecd6" stroke-width="0.7"/>
</svg>
<div style="left:0;top:471.6px;width:960px;height:1.5px;background:#3a3a3a"></div>
</body></html>
